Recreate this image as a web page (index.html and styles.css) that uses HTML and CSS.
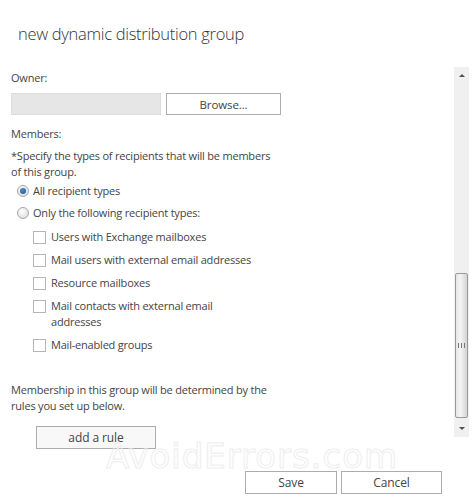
FILE: index.html
```html
<!DOCTYPE html>
<html lang="en">
<head>
  <meta charset="UTF-8">
  <title>new dynamic distribution group</title>
  <link rel="stylesheet" href="styles.css">
</head>
<body>

  <div class="dialog">
    <h1 class="title">new dynamic distribution group</h1>

    <div class="pane">
      <div class="form">
        <label class="field-label">Owner:</label>
        <div class="owner-row">
          <input type="text" class="owner-input" disabled>
          <button class="btn browse">Browse...</button>
        </div>

        <p class="field-label members">Members:</p>
        <p class="hint">*Specify the types of recipients that will be members of this group.</p>

        <div class="radio-row">
          <span class="radio checked"></span>
          <span>All recipient types</span>
        </div>
        <div class="radio-row">
          <span class="radio"></span>
          <span>Only the following recipient types:</span>
        </div>

        <ul class="types">
          <li><span class="check"></span><span>Users with Exchange mailboxes</span></li>
          <li><span class="check"></span><span>Mail users with external email addresses</span></li>
          <li><span class="check"></span><span>Resource mailboxes</span></li>
          <li><span class="check"></span><span>Mail contacts with external email addresses</span></li>
          <li><span class="check"></span><span>Mail-enabled groups</span></li>
        </ul>

        <p class="hint rules">Membership in this group will be determined by the rules you set up below.</p>
        <button class="btn add-rule">add a rule</button>
      </div>

      <div class="scrollbar">
        <div class="arrow up"></div>
        <div class="track">
          <div class="thumb"><span class="grip"></span></div>
        </div>
        <div class="arrow down"></div>
      </div>
    </div>

    <div class="footer">
      <button class="btn">Save</button>
      <button class="btn cancel">Cancel</button>
    </div>

    <div class="watermark">AvoidErrors.com</div>
  </div>

</body>
</html>
```

FILE: styles.css
```css
body {
  margin: 0;
  background: #ffffff;
  font-family: "Open Sans", "Noto Sans", sans-serif;
  font-size: 11px;
  letter-spacing: -0.2px;
  color: #444444;
}

.dialog {
  position: relative;
  width: 474px;
  height: 504px;
  overflow: hidden;
}

.title {
  margin: 0;
  padding: 22px 0 0 18px;
  height: 45px;
  font-size: 16.5px;
  font-weight: 300;
  letter-spacing: -0.3px;
  color: #333333;
  line-height: 24px;
}

.pane {
  display: flex;
  height: 370px;
}

.form {
  flex: 1;
  padding: 3px 0 0 11px;
  line-height: 16px;
}

.field-label {
  display: block;
  margin: 0;
}

.owner-row {
  display: flex;
  gap: 5px;
  margin-top: 7px;
}

.owner-input {
  width: 150px;
  height: 22px;
  box-sizing: border-box;
  margin: 0;
  background: #e6e6e6;
  border: 1px solid #dcdcdc;
}

.btn {
  font-family: inherit;
  font-size: 11.5px;
  letter-spacing: -0.1px;
  color: #444444;
  background: #ffffff;
  border: 1px solid #acacac;
  height: 22px;
  padding: 0;
  margin: 0;
}

.browse {
  width: 115px;
}

.members {
  margin-top: 11px;
}

.hint {
  margin: 6px 0 0;
  width: 270px;
}

.radio-row {
  display: flex;
  align-items: center;
  gap: 4px;
  height: 22px;
  padding-left: 6px;
}

.radio-row:first-of-type {
  margin-top: 2px;
}

.radio {
  width: 10px;
  height: 10px;
  border-radius: 50%;
  border: 1px solid #a8a8a8;
  background: radial-gradient(circle at 40% 35%, #ffffff, #d6d6d6);
  position: relative;
}

.radio.checked::after {
  content: "";
  position: absolute;
  left: 2px;
  top: 2px;
  width: 6px;
  height: 6px;
  border-radius: 50%;
  background: radial-gradient(circle at 40% 35%, #4f8ad0, #1d4f8f);
}

.types {
  list-style: none;
  margin: 1px 0 0;
  padding: 0 0 0 22px;
}

.types li {
  display: flex;
  align-items: flex-start;
  gap: 5px;
  padding: 4px 0 3px;
  width: 232px;
}

.check {
  flex: none;
  width: 11px;
  height: 11px;
  margin-top: 2px;
  border: 1px solid #b5b5b5;
  background: #ffffff;
}

.rules {
  margin-top: 26px;
}

.add-rule {
  width: 120px;
  height: 23px;
  margin: 12px 0 0 25px;
  font-size: 12px;
  background: #f8f8f8;
}

.scrollbar {
  display: flex;
  flex-direction: column;
  width: 15px;
  margin-right: 5px;
  background: #f0f0f0;
}

.arrow {
  height: 17px;
  position: relative;
}

.arrow::after {
  content: "";
  position: absolute;
  left: 5px;
  border-left: 3px solid transparent;
  border-right: 3px solid transparent;
}

.arrow.up::after {
  top: 7px;
  border-bottom: 3px solid #505050;
}

.arrow.down::after {
  top: 7px;
  border-top: 3px solid #505050;
}

.track {
  flex: 1;
  display: flex;
  flex-direction: column;
  justify-content: flex-end;
  padding-bottom: 2px;
}

.thumb {
  height: 143px;
  margin: 0 1px;
  border: 1px solid #9a9a9a;
  border-radius: 2px;
  background: linear-gradient(to right, #e6e6e6, #f4f4f4 40%, #d4d4d4);
  display: flex;
  align-items: center;
  justify-content: center;
}

.grip {
  width: 5px;
  height: 5px;
  border-top: 1px solid #777;
  border-bottom: 1px solid #777;
  background: linear-gradient(#777, #777) center / 5px 1px no-repeat;
  transform: rotate(90deg);
}

.footer {
  display: flex;
  justify-content: flex-end;
  gap: 4px;
  padding: 34px 32px 0 0;
}

.footer .btn {
  width: 92px;
  height: 23px;
  font-size: 12px;
}

.footer .cancel {
  width: 101px;
}

/* faint site mark over the lower part */
.watermark {
  position: absolute;
  left: 106px;
  top: 444px;
  font-family: "DejaVu Sans", sans-serif;
  font-size: 34px;
  line-height: 25px;
  color: transparent;
  -webkit-text-stroke: 1px #eeeeee;
  letter-spacing: 1px;
  pointer-events: none;
}
```
